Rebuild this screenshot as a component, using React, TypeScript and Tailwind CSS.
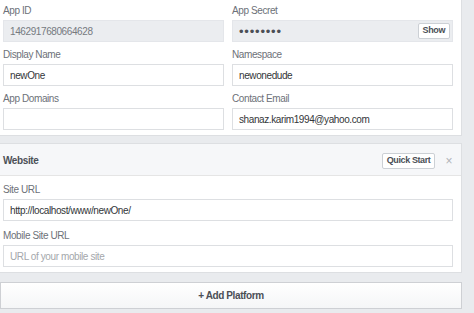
import React from "react";

function Field({ label, value, placeholder, disabled, valueClass, children }: { label: string; value?: string; placeholder?: string; disabled?: boolean; valueClass?: string; children?: React.ReactNode }) {
  return (
    <div className="flex flex-col">
      <div className="h-[16px] leading-[16px] text-[#6d7178] mb-[1px]">{label}</div>
      <div
        className={
          "relative h-[22px] border flex items-center px-[6px] " +
          (disabled ? "bg-[#ebedf0] border-[#e4e6ea] text-[#767a80]" : "bg-white border-[#dddfe2] text-[#333639]")
        }
      >
        {value ? <span className={valueClass}>{value}</span> : <span className="text-[#a4a7ab]">{placeholder}</span>}
        {children}
      </div>
    </div>
  );
}

export default function App() {
  return (
    <div className="w-[474px] h-[313px] bg-[#e9ebee] overflow-hidden text-[10px] tracking-[-0.4px] font-['Liberation_Sans',Arial,sans-serif]">
      <div className="w-[462px]">
        <div className="bg-white border-b border-r border-[#dddfe2] pl-[3px] pr-[8px] pt-[3px] pb-[5px] grid grid-cols-2 gap-x-[8px] gap-y-[5px]">
          <Field label="App ID" value="1462917680664628" disabled />
          <Field label="App Secret" value="••••••••" disabled valueClass="text-[13px] tracking-[0.8px] text-[#4b4f56] leading-none">
            <div className="absolute right-[2px] top-[2px] h-[16px] px-[4px] bg-white border border-[#ccd0d5] rounded-[2px] text-[9px] font-bold text-[#4b4f56] flex items-center">Show</div>
          </Field>
          <Field label="Display Name" value="newOne" />
          <Field label="Namespace" value="newonedude" />
          <Field label="App Domains" />
          <Field label="Contact Email" value="shanaz.karim1994@yahoo.com" />
        </div>

        <div className="mt-[7px] bg-white border-y border-r border-[#dddfe2]">
          <div className="h-[32px] bg-[#f6f7f9] border-b border-[#e5e5e5] flex items-center pl-[3px] pr-[9px] pt-[2px]">
            <span className="font-bold text-[#4b4f56]">Website</span>
            <div className="ml-auto h-[16px] px-[4px] bg-white border border-[#ccd0d5] rounded-[2px] text-[9px] font-bold text-[#4b4f56] flex items-center">Quick Start</div>
            <span className="ml-[10px] text-[#b0b3b8] text-[12px] leading-none">×</span>
          </div>
          <div className="pl-[3px] pr-[8px] pt-[6px] pb-[5px] flex flex-col gap-[7px]">
            <Field label="Site URL" value="http://localhost/www/newOne/" />
            <Field label="Mobile Site URL" placeholder="URL of your mobile site" />
          </div>
        </div>

        <div className="mt-[9px] h-[27px] border border-[#ced0d4] bg-gradient-to-b from-white to-[#f5f6f7] flex items-center justify-center font-bold text-[#4b4f56]">
          + Add Platform
        </div>
      </div>
    </div>
  );
}
